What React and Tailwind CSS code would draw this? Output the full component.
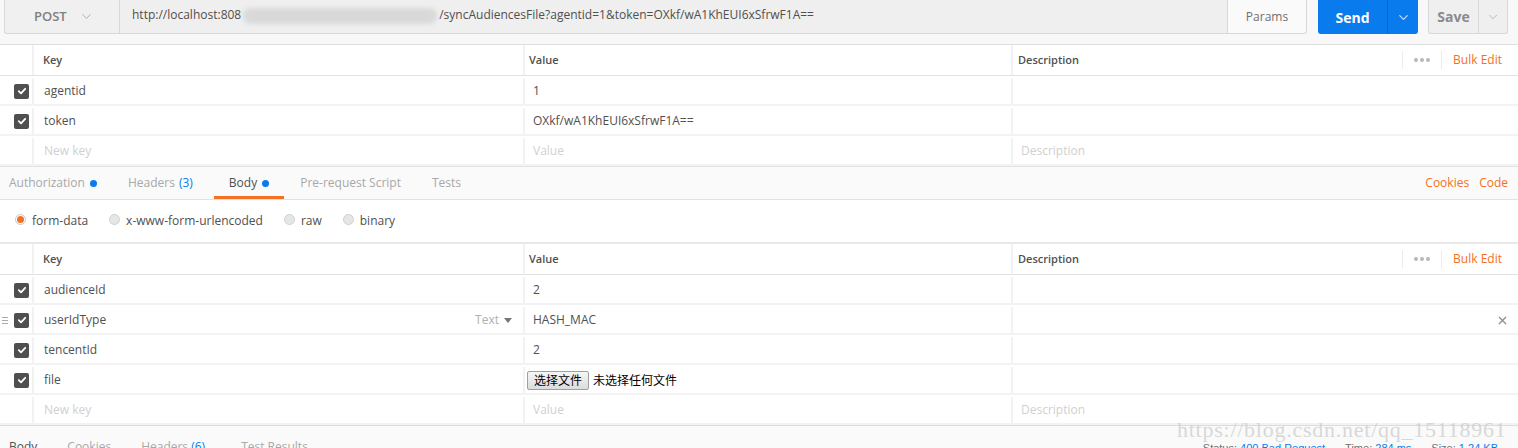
import { ChevronDown, X } from 'lucide-react'

const font = { fontFamily: '"Open Sans", "Noto Sans CJK SC", sans-serif' }

function Check() {
  return (
    <div className="w-[15px] h-[15px] rounded-[2px] bg-[#4f4f4f] flex items-center justify-center">
      <svg width="10" height="10" viewBox="0 0 10 10">
        <path d="M1.8 5.2 L4 7.3 L8.2 2.8" stroke="white" strokeWidth="1.8" fill="none" strokeLinecap="round" strokeLinejoin="round" />
      </svg>
    </div>
  )
}

function HeaderRow() {
  return (
    <div className="grid grid-cols-[34px_491px_488px_1fr] h-[31px] border-b border-[#e2e2e2] bg-white text-[11px] font-semibold text-[#505050]">
      <div className="border-r-2 border-[#f2f2f2]" />
      <div className="pl-[9px] flex items-center border-r-2 border-[#f2f2f2]">Key</div>
      <div className="pl-[4px] flex items-center border-r-2 border-[#f2f2f2]">Value</div>
      <div className="pl-[5px] flex items-center justify-between">
        <span>Description</span>
        <div className="flex items-center h-full py-[6px]">
          <div className="h-full border-l border-[#ececec] flex items-center px-[11px] gap-[2px]">
            <span className="w-[4px] h-[4px] rounded-full bg-[#b8b8b8]" />
            <span className="w-[4px] h-[4px] rounded-full bg-[#b8b8b8]" />
            <span className="w-[4px] h-[4px] rounded-full bg-[#b8b8b8]" />
          </div>
          <div className="h-full border-l border-[#ececec] flex items-center pl-[11px] pr-[16px] text-[12px] font-normal text-[#f47023]">
            Bulk Edit
          </div>
        </div>
      </div>
    </div>
  )
}

function Row({ k, v, placeholder, checked = true, extra, value }) {
  const tone = placeholder ? 'text-[#d0d0d0]' : 'text-[#505050]'
  return (
    <div className="grid grid-cols-[34px_491px_488px_1fr] h-[30px] pt-[2px] border-b-2 border-[#f3f3f3] bg-white text-[12px]">
      <div className="relative flex items-center justify-end pr-[3px] border-r-2 border-[#f2f2f2]">
        {extra && (
          <div className="absolute left-[2px] top-[10px] flex flex-col gap-[2px]">
            <span className="w-[6px] h-[1px] bg-[#aaa]" />
            <span className="w-[6px] h-[1px] bg-[#aaa]" />
            <span className="w-[6px] h-[1px] bg-[#aaa]" />
          </div>
        )}
        {checked && <Check />}
      </div>
      <div className={`pl-[10px] pr-[11px] flex items-center justify-between border-r-2 border-[#f2f2f2] ${tone}`}>
        <span>{k}</span>
        {extra && (
          <span className="flex items-center gap-[5px] text-[#b0b0b0] text-[12px]">
            Text
            <svg width="8" height="5" viewBox="0 0 8 5"><path d="M0 0 H8 L4 5 Z" fill="#777" /></svg>
          </span>
        )}
      </div>
      <div className={`pl-[8px] flex items-center border-r-2 border-[#f2f2f2] ${tone}`}>
        {value || v}
      </div>
      <div className={`pl-[8px] pr-[9px] flex items-center justify-between ${tone}`}>
        <span>{placeholder ? 'Description' : ''}</span>
        {extra && <X size={13} strokeWidth={2.2} className="text-[#8a8a8a]" />}
      </div>
    </div>
  )
}

function FileValue() {
  return (
    <div className="flex items-center gap-[4px] -ml-[6px]" style={{ fontFamily: '"Noto Sans CJK SC", sans-serif' }}>
      <div className="h-[19px] px-[6px] border border-[#a0a0a0] rounded-[2px] bg-gradient-to-b from-[#f6f6f6] to-[#dcdcdc] text-[12px] text-black flex items-center leading-none">
        选择文件
      </div>
      <span className="text-[12px] text-black">未选择任何文件</span>
    </div>
  )
}

function Radio({ on, label }) {
  return (
    <div className="flex items-center gap-[6px]">
      <span className={`w-[11px] h-[11px] rounded-full border ${on ? 'border-[#c8c8c8] bg-white' : 'border-[#d0d0d0] bg-[#e6e6e6]'} flex items-center justify-center -mt-[4px]`}>
        {on && <span className="w-[7px] h-[7px] rounded-full bg-[#f47023]" />}
      </span>
      <span className="text-[12px] text-[#505050]">{label}</span>
    </div>
  )
}

export default function App() {
  return (
    <div className="relative w-[1518px] h-[448px] overflow-hidden bg-white" style={font}>
      {/* URL bar */}
      <div className="h-[45px] bg-[#f8f8f8] border-b border-[#dedede] flex items-start pl-[4px]">
        <div className="w-[116px] h-[34px] bg-[#f0f0f0] border border-t-0 border-[#d8d8d8] rounded-bl-[3px] flex items-center pl-[29px] gap-[12px] text-[13px] font-semibold text-[#808080]">
          POST
          <ChevronDown size={15} strokeWidth={1.5} className="text-[#a8a8a8]" />
        </div>
        <div className="w-[1107px] h-[34px] bg-[#efefef] border-b border-[#d8d8d8] flex items-start pt-[6px] pl-[12px] text-[12px] text-[#505050]">
          <span>http://localhost:808</span>
          <span className="w-[194px] h-[16px] mt-[2px] mx-[2px] bg-[#d9d9d9] blur-[2px] rounded-full" />
          <span>/syncAudiencesFile?agentid=1&amp;token=OXkf/wA1KhEUI6xSfrwF1A==</span>
        </div>
        <div className="w-[80px] h-[34px] bg-[#fafafa] border border-t-0 border-[#d8d8d8] rounded-br-[3px] flex items-center justify-center text-[12px] text-[#707070]">
          Params
        </div>
        <div className="ml-[11px] w-[100px] h-[34px] bg-[#0a7bec] rounded-b-[3px] flex text-white">
          <div className="w-[69px] flex items-center justify-center text-[14px] font-bold">Send</div>
          <div className="flex-1 border-l border-[#0866c6] flex items-center justify-center">
            <ChevronDown size={15} strokeWidth={2} className="text-[#b9d9fa]" />
          </div>
        </div>
        <div className="ml-[10px] w-[80px] h-[34px] bg-[#efefef] border border-t-0 border-[#d8d8d8] rounded-b-[3px] flex">
          <div className="w-[49px] flex items-center justify-center text-[14px] font-bold text-[#8a8a8a]">Save</div>
          <div className="flex-1 border-l border-[#d8d8d8] flex items-center justify-center">
            <ChevronDown size={14} strokeWidth={1.5} className="text-[#b0b0b0]" />
          </div>
        </div>
      </div>

      {/* Params table */}
      <HeaderRow />
      <Row k="agentid" v="1" />
      <Row k="token" v="OXkf/wA1KhEUI6xSfrwF1A==" />
      <Row k="New key" v="Value" placeholder checked={false} />

      {/* Tabs */}
      <div className="h-[34px] bg-[#fafafa] border-y border-[#e2e2e2] flex items-stretch justify-between text-[12px]">
        <div className="flex items-stretch">
          <div className="pl-[9px] pr-[15px] flex items-center gap-[5px] text-[#a8a8a8]">
            Authorization <span className="w-[7px] h-[7px] rounded-full bg-[#0a7bec]" />
          </div>
          <div className="pl-[16px] pr-[15px] flex items-center gap-[4px] text-[#a8a8a8]">
            Headers <span className="text-[#0a7bec]">(3)</span>
          </div>
          <div className="px-[15px] ml-[6px] flex items-center gap-[5px] text-[#505050] border-b-[3px] border-[#f47023] pt-[3px]">
            Body <span className="w-[7px] h-[7px] rounded-full bg-[#0a7bec]" />
          </div>
          <div className="pl-[16px] pr-[15px] flex items-center text-[#a8a8a8]">Pre-request Script</div>
          <div className="pl-[16px] pr-[15px] flex items-center text-[#a8a8a8]">Tests</div>
        </div>
        <div className="flex items-center gap-[10px] pr-[10px] text-[#f47023]">
          <span>Cookies</span>
          <span>Code</span>
        </div>
      </div>

      {/* Body type */}
      <div className="h-[44px] bg-white border-b-2 border-[#e8e8e8] flex items-center pl-[15px] gap-[21px]">
        <Radio on label="form-data" />
        <Radio label="x-www-form-urlencoded" />
        <Radio label="raw" />
        <Radio label="binary" />
      </div>

      {/* Form table */}
      <HeaderRow />
      <Row k="audienceId" v="2" />
      <Row k="userIdType" v="HASH_MAC" extra />
      <Row k="tencentId" v="2" />
      <Row k="file" value={<FileValue />} />
      <Row k="New key" v="Value" placeholder checked={false} />

      {/* Response bar */}
      <div className="h-[40px] bg-[#fafafa] border-t border-[#dcdcdc] flex items-start justify-between pt-[12px]">
        <div className="flex gap-[30px] pl-[9px] text-[12px] text-[#a8a8a8]">
          <span className="text-[#505050]">Body</span>
          <span>Cookies</span>
          <span>Headers <span className="text-[#0a7bec]">(6)</span></span>
          <span className="ml-[6px]">Test Results</span>
        </div>
        <div className="flex gap-[20px] pr-[20px] pt-[2px] text-[11px] text-[#707070]" style={{ fontFamily: '"Liberation Sans", Arial, sans-serif' }}>
          <span>Status: <span className="text-[#0a7bec]">400 Bad Request</span></span>
          <span>Time: <span className="text-[#0a7bec]">284 ms</span></span>
          <span>Size: <span className="text-[#0a7bec]">1.24 KB</span></span>
        </div>
      </div>

      {/* watermark */}
      <div className="absolute left-[1177px] top-[413px] text-[22px] tracking-[0.75px] text-[#cfcfcf]/80 pointer-events-none" style={{ fontFamily: '"Liberation Serif", serif' }}>
        https://blog.csdn.net/qq_15118961
      </div>
    </div>
  )
}
